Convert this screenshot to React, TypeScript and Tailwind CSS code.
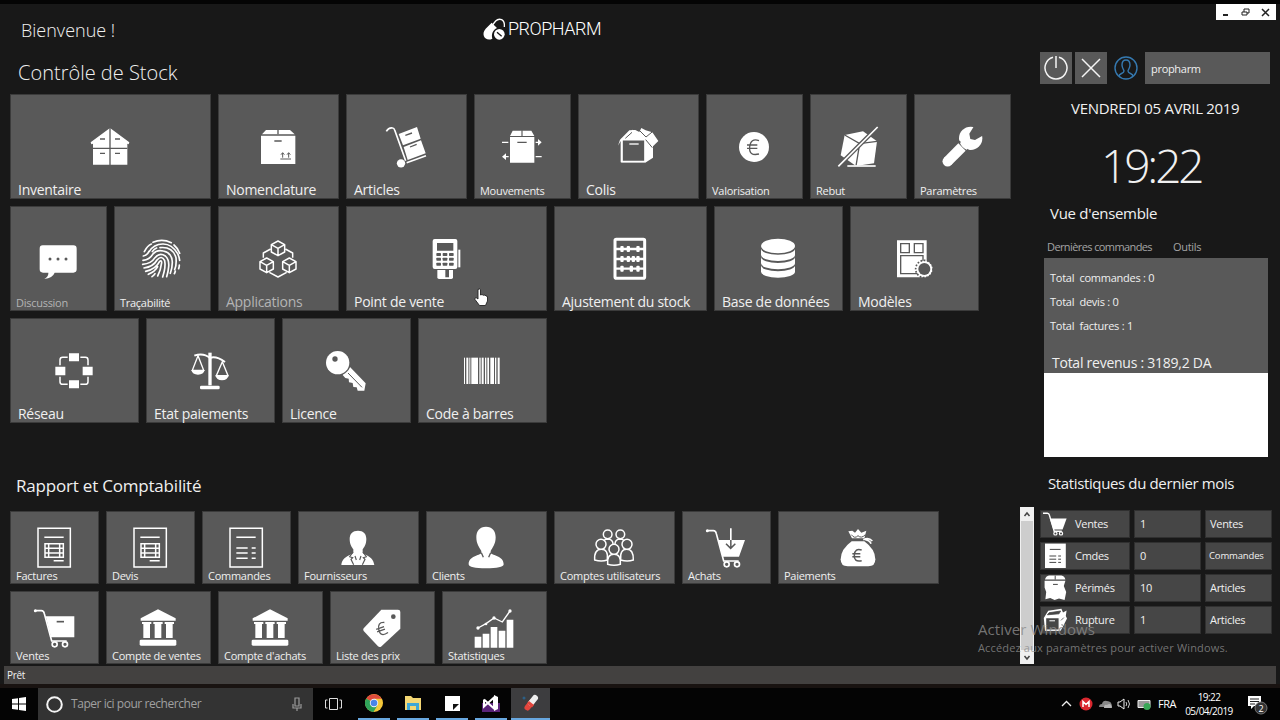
import React from "react";
import { clsx } from "clsx";

const TILE = "#595959";

// every tile drawing lives on a 120x120 grid, shown at 40px
function Glyph({ children, size = 40 }: { children: React.ReactNode; size?: number }) {
  return (
    <svg width={size} height={size} viewBox="0 0 120 120" fill="#fff" className="block overflow-visible">
      {children}
    </svg>
  );
}

const WarehouseIcon = () => (
  <Glyph>
    <path d="M60 3 118 46l-2 6-4-2v63H9V50l-5 2-2-6z" />
    <path d="M60 0v114M9 64h103" stroke={TILE} strokeWidth="4" />
    <path d="M30 36h15M75 36h15M30 79h15M75 79h15" stroke={TILE} strokeWidth="4" />
  </Glyph>
);

const BoxIcon = () => (
  <Glyph>
    <path d="M12 22 24 9h72l14 13zM9 26h103v85H9z" />
    <path d="M60 8v14M49 42h22" stroke={TILE} strokeWidth="4" />
    <path d="M74 92V78m-5 5 5-6 5 6M92 92V78m-5 5 5-6 5 6M67 96h32" stroke={TILE} strokeWidth="3" fill="none" />
  </Glyph>
);

const TrolleyIcon = () => (
  <Glyph>
    <path d="M1 13Q8 1 20 3q4 0 6 6l33 92" fill="none" stroke="#fff" strokeWidth="5" />
    <circle cx="45" cy="109" r="12.5" />
    <path d="m62 107 58-21" stroke="#fff" strokeWidth="5" />
    <path d="M38 21 93 0l11 35-53 20zM53 60l52-20 14 39-54 20z" />
    <path d="m58 25 20-7M72 60l20-8" stroke={TILE} strokeWidth="4" />
  </Glyph>
);

const MovesIcon = () => (
  <Glyph>
    <path d="M32 11h56l9 16H24zM24 30h73v77H24z" />
    <path d="M60 10v18M46 46h28" stroke={TILE} strokeWidth="3.5" />
    <path d="M0 46h19M12 89h8M101 46h10M101 89h18" stroke="#fff" strokeWidth="4" />
    <path d="m108 36 11 10-11 10zM12 79 0 89l12 10z" />
  </Glyph>
);

const OpenBoxIcon = ({ size }: { size?: number }) => (
  <Glyph size={size}>
    <path d="M0 56 6 38l28-28 18-1 12 6 6-12 13 7 20 6 18 26-16 16v34L84 106H8V42z" />
    <path d="M12 38h69v66H12z" fill={TILE} stroke="#fff" strokeWidth="5" />
    <path d="M34 51h28" stroke="#fff" strokeWidth="4" />
    <path d="M12 36 44 8l26 14 12 14z" />
    <path d="M62 8 84 30l22-18M83 38l20 24" stroke={TILE} strokeWidth="3" fill="none" />
    <path d="m22 34 20-18" stroke={TILE} strokeWidth="3" />
  </Glyph>
);

const EuroIcon = () => (
  <Glyph>
    <circle cx="60" cy="60" r="45" />
    <path d="M75 41Q50 32 47 60t28 21M39 54h31M39 64h31" fill="none" stroke={TILE} strokeWidth="4" />
  </Glyph>
);

const ScrapIcon = () => (
  <Glyph>
    <path d="m20 24 55-11 42 30-9 66-54 8L8 85z" />
    <path d="m20 24 45 26 52-7M65 50 54 117" fill="none" stroke={TILE} strokeWidth="4" />
    <path d="M28 117h85" stroke="#fff" strokeWidth="5" />
    <path d="M1 118 119 0" stroke={TILE} strokeWidth="13" />
    <path d="M1 118 119 0" stroke="#fff" strokeWidth="5" />
  </Glyph>
);

const WrenchIcon = () => (
  <Glyph>
    <circle cx="86" cy="34" r="35" />
    <path d="M98-6 82 20l3 16 14 3 28-16z" fill={TILE} />
    <path d="M17 103 66 54" stroke={TILE} strokeWidth="39" />
    <path d="m17 103 43-43" stroke="#fff" strokeWidth="31" />
    <circle cx="17" cy="103" r="15.5" />
    <path d="M54 48a35 35 0 0 0 20 20l14-12-20-22z" />
  </Glyph>
);

const ChatIcon = () => (
  <Glyph>
    <path d="M14 19h92q10 0 10 10v62q0 10-10 10H50q-6 16-31 19 13-7 12-19H15q-10 0-10-10V29q0-10 9-10z" />
    <g fill={TILE}>
      <circle cx="36" cy="60" r="4.5" />
      <circle cx="60" cy="60" r="4.5" />
      <circle cx="84" cy="60" r="4.5" />
    </g>
  </Glyph>
);

const FingerprintIcon = () => (
  <Glyph>
    <g fill="none" stroke="#fff" strokeWidth="5" strokeLinecap="round">
      <path d="M33 10Q60-2 88 11" />
      <path d="M7 38Q16 20 28 15M22 37Q35 16 62 15t45 29q5 10 6 20" />
      <path d="M54 26q38-4 48 30 2 24-4 36M4 51q12-2 17-14M44 27q-8 3-13 11" />
      <path d="M3 64q20-2 29-18 12-15 32-10 26 5 27 34 0 16-6 33M2 76q26-2 37-20 14-17 31-5 12 11 10 32-1 14-6 30" />
      <path d="M6 87q28-4 39-24 14-16 23 2 4 18-6 49M11 97q31-7 42-30 6-4 6 4-3 24-12 40M19 106q20-8 28-23M30 113q6-4 9-9" />
      <path d="M97 104q2-3 3-8M112 78q0 6-2 11M96 18q12 10 17 25" />
    </g>
  </Glyph>
);

const CUBE = "M0-22 20-11V11L0 22-20 11V-11ZM-20-11 0 0 20-11M0 0V22";

const CubesIcon = () => (
  <Glyph>
    <g fill="none" stroke="#fff" strokeWidth="4.5" strokeLinejoin="round">
      <path d={CUBE} transform="translate(60 28)" />
      <path d={CUBE} transform="translate(26 79)" />
      <path d={CUBE} transform="translate(94 79)" />
      <path d="M38 30 16 42v14M82 30l22 12v14M34 100l26 14 26-14" />
    </g>
  </Glyph>
);

const TerminalIcon = () => (
  <Glyph>
    <rect x="20" y="0" width="74" height="90" rx="6" />
    <path d="M97 32h6v53h-6z" />
    <path d="M34 93h47v22q0 5-5 5H39q-5 0-5-5z" />
    <g fill={TILE}>
      <path d="M33 12h49v23H33zM58 93h11v22H58z" />
      {[42, 56, 71].map((y) =>
        [31, 50, 69].map((x) => <rect key={`${x}-${y}`} x={x} y={y} width="14" height="9" rx="2" />)
      )}
    </g>
  </Glyph>
);

const AbacusIcon = () => (
  <Glyph>
    <rect x="15" y="1" width="89" height="117" rx="4" fill="none" stroke="#fff" strokeWidth="9" />
    <path d="M15 30h89M15 60h89M15 89h89" stroke="#fff" strokeWidth="7" />
    {[
      [30, 36], [30, 55], [30, 84],
      [60, 36], [60, 55], [60, 70], [60, 84],
      [89, 36], [89, 64], [89, 84],
    ].map(([y, x]) => (
      <rect key={`${x}-${y}`} x={x - 5} y={y - 9} width="10" height="18" rx="3" />
    ))}
  </Glyph>
);

const DatabaseIcon = () => (
  <Glyph>
    <ellipse cx="60" cy="21" rx="51" ry="22" />
    {[29, 54, 79].map((y) => (
      <path key={y} d={`M9 ${y}a51 18 0 0 0 102 0v19a51 18 0 0 1-102 0z`} />
    ))}
  </Glyph>
);

const TemplateIcon = () => (
  <Glyph>
    <path d="M9 4h89v111H9z" />
    <g fill="none" stroke={TILE} strokeWidth="4">
      <path d="M20 14h26v27H20zM61 14h26v27H61zM20 50h67v54H20z" />
    </g>
    <circle cx="91" cy="90" r="25" />
    <circle cx="91" cy="90" r="26" fill="none" stroke={TILE} strokeWidth="5" strokeDasharray="5 5" />
    <circle cx="91" cy="90" r="18" fill={TILE} />
  </Glyph>
);

const NetworkIcon = () => (
  <Glyph>
    <path d="M45 7h30v24H45zM45 88h30v24H45zM4 47h30v26H4zM86 47h30v26H86z" />
    <path
      d="M41 19H26q-8 0-8 8v16M79 19h15q8 0 8 8v16M41 100H26q-8 0-8-8V77M79 100h15q8 0 8-8V77"
      fill="none"
      stroke="#fff"
      strokeWidth="4.5"
    />
  </Glyph>
);

const ScalesIcon = () => (
  <Glyph>
    <path d="M55 5h10v98H55z" />
    <rect x="30" y="104" width="59" height="11" rx="4" />
    <path d="M13 14q27-10 47 7 18-7 45 12" fill="none" stroke="#fff" strokeWidth="6" />
    <path d="M24 14 7 58h34zM97 32 79 74h35z" fill="none" stroke="#fff" strokeWidth="4" />
    <path d="M4 57h40q-3 14-20 14T4 57zM76 73h40q-3 15-20 15T76 73z" />
  </Glyph>
);

const KeyIcon = () => (
  <Glyph>
    <path d="m72 48 47 49-4 22H95l-3-10-10-1-2-12-11-2-1-11-10-2-8-9z" />
    <circle cx="35" cy="35" r="39" fill={TILE} />
    <circle cx="35" cy="35" r="35" />
    <circle cx="27" cy="24" r="8" fill={TILE} />
    <path d="m66 66 42 43" stroke={TILE} strokeWidth="3" />
  </Glyph>
);

const BARS = [[6, 3], [13, 6], [22, 3], [28, 20], [52, 4], [59, 6], [69, 4], [76, 5], [85, 11], [99, 4], [107, 6]];

const BarcodeIcon = () => (
  <Glyph>
    {BARS.map(([x, w]) => (
      <rect key={x} x={x} y="20" width={w} height="79" />
    ))}
  </Glyph>
);

const InvoiceIcon = () => (
  <Glyph>
    <g fill="none" stroke="#fff" strokeWidth="4.5">
      <path d="M12 1h97v116H12zM31 28h58M59 98h30" />
      <path d="M33 47h55v41H33zM33 61h55M33 75h55M44 47v41M77 47v41" />
    </g>
  </Glyph>
);

const OrderIcon = () => (
  <Glyph>
    <g fill="none" stroke="#fff" strokeWidth="4.5">
      <path d="M12 1h97v116H12zM31 28h58" />
      <path d="M31 60h34M31 75h34M31 91h34M77 60h12M77 75h12M77 91h12" />
    </g>
  </Glyph>
);

const SupplierIcon = () => (
  <Glyph>
    <path d="M60 8c16 0 25 9 25 25 0 18-8 26-11 31v10c0 6 32 8 35 37H10c3-29 36-31 36-37V64c-3-5-11-13-11-31C35 17 44 8 60 8z" />
    <path d="m45 72-10 14 9 3-5 5 8 16M75 72l10 14-9 3 5 5-8 16M51 84l4 12M69 84l-4 12" fill="none" stroke={TILE} strokeWidth="3.5" />
  </Glyph>
);

const ClientIcon = () => (
  <Glyph>
    <path d="M60-4c19 0 29 13 29 32 0 21-10 32-15 41v6c6 8 39 8 39 34 0 8-20 12-53 12S8 117 8 109c0-26 33-26 38-34v-6c-5-9-15-20-15-41C31 9 41-4 60-4z" />
    <path d="m46 74 6 14M74 74l-6 14" stroke={TILE} strokeWidth="4" />
  </Glyph>
);

const UsersIcon = () => (
  <Glyph>
    <g fill={TILE} stroke="#fff" strokeWidth="4.5">
      <path d="M26 48q0-14 15-15 16 1 16 15M63 48q0-14 15-15 16 1 16 15" />
      <circle cx="41" cy="19" r="13" />
      <circle cx="79" cy="19" r="13" />
      <path d="M2 96q-2-32 20-32t18 32q-18 6-38 0zM80 96q-3-32 18-32t20 32q-18 6-38 0z" />
      <circle cx="21" cy="49" r="15" />
      <circle cx="99" cy="49" r="15" />
      <path d="M41 109q-3-30 19-30t19 30q-19 6-38 0z" />
      <circle cx="60" cy="64" r="15" />
    </g>
  </Glyph>
);

const CartFrame = () => (
  <>
    <path d="M4 8h18q7 0 9 9l22 82h45" fill="none" stroke="#fff" strokeWidth="5" />
    <circle cx="4" cy="8" r="4.5" />
    <circle cx="62" cy="109" r="7.5" fill={TILE} stroke="#fff" strokeWidth="5" />
    <circle cx="93" cy="109" r="7.5" fill={TILE} stroke="#fff" strokeWidth="5" />
  </>
);

const PurchaseIcon = () => (
  <Glyph>
    <CartFrame />
    <path d="M37 36h80L99 86H50zM72 1h5v36h-5z" />
    <path d="M74.5 36v24M60 47l14 14 14-14" fill="none" stroke={TILE} strokeWidth="4.5" />
  </Glyph>
);

const MoneyBagIcon = () => (
  <Glyph>
    <path d="M31 10 43 8l8 6 9-11 10 11 15-6-6 23H42z" />
    <path d="M40 20q10 14 20 3 10 10 22-3" fill="none" stroke={TILE} strokeWidth="3" />
    <path d="M41 40h38q33 24 33 54 0 21-21 21H29q-21 0-21-21 0-30 33-54z" />
    <path d="M76 35q16-8 27 4M82 35q14 3 17 12" fill="none" stroke="#fff" strokeWidth="5" />
    <path d="M71 66q-20-7-22 15t22 17M43 77h24M43 86h24" fill="none" stroke={TILE} strokeWidth="4.5" />
  </Glyph>
);

const SalesIcon = () => (
  <Glyph>
    <CartFrame />
    <path d="M35 25h86v63H51z" />
    <path d="M68 41h22" stroke={TILE} strokeWidth="5" />
  </Glyph>
);

const BankIcon = () => (
  <Glyph>
    <path d="m60 4 53 27v7H8v-7z" />
    {[12, 46, 80].map((x) => (
      <path key={x} d={`M${x} 42h28v6h-4v42h-20v-42h-4z`} />
    ))}
    <rect x="5" y="95" width="110" height="18" rx="4" />
  </Glyph>
);

const TagIcon = () => (
  <Glyph>
    <path d="M58 5h50q7 0 7 7v50l-58 54q-5 3-9-1L5 69q-3-4 0-8z" />
    <circle cx="94" cy="26" r="7" fill={TILE} />
    <path
      d="M73 47Q53 38 50 62t23 17M43 58h25M43 66h25"
      fill="none"
      stroke={TILE}
      strokeWidth="4"
      transform="rotate(-20 60 62)"
    />
  </Glyph>
);

const ChartIcon = () => (
  <Glyph>
    <path d="M2 86h20v33H2zM26 77h20v42H26zM50 57h20v62H50zM74 68h20v51H74zM98 35h20v84H98z" />
    <path d="m12 60 24-13 24-17 25 12 23-33" fill="none" stroke="#fff" strokeWidth="4" />
    <circle cx="12" cy="60" r="5" />
    <circle cx="36" cy="48" r="4" />
    <circle cx="60" cy="30" r="5" />
    <circle cx="108" cy="9" r="5" />
  </Glyph>
);

const StatCart = () => (
  <Glyph size={24}>
    <path d="M0 6h22q8 0 10 10l24 80h38" fill="none" stroke="#fff" strokeWidth="7" />
    <path d="M34 32h84L98 88H52z" />
    <circle cx="62" cy="107" r="8" fill="none" stroke="#fff" strokeWidth="6" />
    <circle cx="90" cy="107" r="8" fill="none" stroke="#fff" strokeWidth="6" />
  </Glyph>
);

const StatDoc = () => (
  <Glyph size={24}>
    <path d="M10-2h104v122H10z" />
    <path d="M34 27h54M32 60h34M32 76h34M32 92h34M76 60h14M76 76h14M76 92h14" stroke="#464646" strokeWidth="5" />
  </Glyph>
);

const StatBag = () => (
  <Glyph size={24}>
    <path d="M10 18q4-18 20-20h62q16 2 20 20zM8 24h104l-8 26 12 30-8 40-28-8-22 8-22-10-24 6 4-36-8-22z" />
    <path d="M61-2v20M50 42h24" stroke="#464646" strokeWidth="5" />
  </Glyph>
);

const StatOpenBox = () => (
  <Glyph size={24}>
    <path d="M4 50 26 14 92 4l8 18 18-10-4 28 6 12-20 40-12 22H10z" />
    <path d="M13 48h68v62H13z" fill="#464646" stroke="#fff" strokeWidth="6" />
    <path d="M32 64h28" stroke="#fff" strokeWidth="5" />
    <path d="m22 34 8-10 58-9-8 14zM90 62l14-14M92 84l8 2" fill="#464646" stroke="#464646" strokeWidth="4" />
  </Glyph>
);

interface TileItem {
  label: string;
  icon: React.ReactNode;
  width: string;
  small?: boolean;
  dim?: boolean;
}

const STOCK_ROWS: TileItem[][] = [
  [
    { label: "Inventaire", icon: <WarehouseIcon />, width: "w-[201px]" },
    { label: "Nomenclature", icon: <BoxIcon />, width: "w-[121px]" },
    { label: "Articles", icon: <TrolleyIcon />, width: "w-[121px]" },
    { label: "Mouvements", icon: <MovesIcon />, width: "w-[97px]", small: true },
    { label: "Colis", icon: <OpenBoxIcon />, width: "w-[121px]" },
    { label: "Valorisation", icon: <EuroIcon />, width: "w-[97px]", small: true },
    { label: "Rebut", icon: <ScrapIcon />, width: "w-[97px]", small: true },
    { label: "Paramètres", icon: <WrenchIcon />, width: "w-[97px]", small: true },
  ],
  [
    { label: "Discussion", icon: <ChatIcon />, width: "w-[97px]", small: true, dim: true },
    { label: "Traçabilité", icon: <FingerprintIcon />, width: "w-[97px]", small: true },
    { label: "Applications", icon: <CubesIcon />, width: "w-[121px]", dim: true },
    { label: "Point de vente", icon: <TerminalIcon />, width: "w-[201px]" },
    { label: "Ajustement du stock", icon: <AbacusIcon />, width: "w-[153px]" },
    { label: "Base de données", icon: <DatabaseIcon />, width: "w-[129px]" },
    { label: "Modèles", icon: <TemplateIcon />, width: "w-[129px]" },
  ],
  [
    { label: "Réseau", icon: <NetworkIcon />, width: "w-[129px]" },
    { label: "Etat paiements", icon: <ScalesIcon />, width: "w-[129px]" },
    { label: "Licence", icon: <KeyIcon />, width: "w-[129px]" },
    { label: "Code à barres", icon: <BarcodeIcon />, width: "w-[129px]" },
  ],
];

const REPORT_ROWS: TileItem[][] = [
  [
    { label: "Factures", icon: <InvoiceIcon />, width: "w-[89px]", small: true },
    { label: "Devis", icon: <InvoiceIcon />, width: "w-[89px]", small: true },
    { label: "Commandes", icon: <OrderIcon />, width: "w-[89px]", small: true },
    { label: "Fournisseurs", icon: <SupplierIcon />, width: "w-[121px]", small: true },
    { label: "Clients", icon: <ClientIcon />, width: "w-[121px]", small: true },
    { label: "Comptes utilisateurs", icon: <UsersIcon />, width: "w-[121px]", small: true },
    { label: "Achats", icon: <PurchaseIcon />, width: "w-[89px]", small: true },
    { label: "Paiements", icon: <MoneyBagIcon />, width: "w-[161px]", small: true },
  ],
  [
    { label: "Ventes", icon: <SalesIcon />, width: "w-[89px]", small: true },
    { label: "Compte de ventes", icon: <BankIcon />, width: "w-[105px]", small: true },
    { label: "Compte d'achats", icon: <BankIcon />, width: "w-[105px]", small: true },
    { label: "Liste des prix", icon: <TagIcon />, width: "w-[105px]", small: true },
    { label: "Statistiques", icon: <ChartIcon />, width: "w-[105px]", small: true },
  ],
];

const STATS = [
  { icon: <StatCart />, name: "Ventes", value: "1", unit: "Ventes" },
  { icon: <StatDoc />, name: "Cmdes", value: "0", unit: "Commandes" },
  { icon: <StatBag />, name: "Périmés", value: "10", unit: "Articles" },
  { icon: <StatOpenBox />, name: "Rupture", value: "1", unit: "Articles" },
];

function Tile({ item, height }: { item: TileItem; height: string }) {
  return (
    <div className={clsx("grid shrink-0 border border-[#3b3b3b] bg-[#595959]", item.width, height)}>
      <div className="col-start-1 row-start-1 self-center justify-self-center pr-px">{item.icon}</div>
      <div
        className={clsx(
          "col-start-1 row-start-1 self-end whitespace-nowrap",
          item.small
            ? "pl-[5px] text-[11px] leading-[15px] tracking-[-0.27px]"
            : "pl-[7px] text-[14px] leading-[17px] tracking-[-0.28px]",
          item.dim ? "text-[#b4b4b4]" : "text-[#f0f0f0]"
        )}
      >
        {item.label}
      </div>
    </div>
  );
}

function TileGrid({ rows, height }: { rows: TileItem[][]; height: string }) {
  return (
    <div className="flex flex-col gap-[7px] pl-[10px]">
      {rows.map((row, i) => (
        <div key={i} className="flex gap-[7px]">
          {row.map((item) => (
            <Tile key={item.label} item={item} height={height} />
          ))}
        </div>
      ))}
    </div>
  );
}

function Logo() {
  return (
    <div className="-mt-[3px] flex items-center">
      <svg width="22" height="22" viewBox="0 0 66 66" className="overflow-visible">
        <path d="M26 24 38 9q8-8 18-4 10 6 8 22" fill="none" stroke="#fff" strokeWidth="4" />
        <path d="M26 14 8 32C-8 50 8 72 28 62c-4-14 2-26 14-32z" fill="#fff" />
        <circle cx="49" cy="49" r="16" fill="#fff" />
        <path d="m42 43 14 12" stroke="#181818" strokeWidth="4" />
      </svg>
      <span className="ml-[3px] font-['Roboto'] text-[18px] font-light leading-[26px] tracking-[-0.5px] text-white">
        PROPHARM
      </span>
    </div>
  );
}

function WindowControls() {
  return (
    <div className="flex h-[16px] w-[60px] items-center justify-around self-end bg-white">
      <svg width="60" height="16" fill="none" stroke="#222">
        <path d="M7 11h5" strokeWidth="2" />
        <path d="M26 8h5v3h-5zM28 8V5h5v4h-2" strokeWidth="1" />
        <path d="m46 5 7 7M53 5l-7 7" strokeWidth="1.5" />
      </svg>
    </div>
  );
}

function SidePanel() {
  return (
    <aside className="flex w-[236px] shrink-0 flex-col text-[#f0f0f0]">
      <WindowControls />
      <div className="mt-[32px] flex h-[32px]">
        <div className="flex w-[32px] items-center justify-center bg-[#595959]">
          <svg width="24" height="24" fill="none" stroke="#f4f4f4" strokeWidth="1.5">
            <path d="M9 1.3a11 11 0 1 0 6 0M12 0v12" />
          </svg>
        </div>
        <div className="ml-[3px] flex w-[32px] items-center justify-center bg-[#595959]">
          <svg width="20" height="20" stroke="#f4f4f4" strokeWidth="1.5">
            <path d="m1 1 18 18M19 1 1 19" />
          </svg>
        </div>
        <div className="flex w-[38px] items-center justify-center">
          <svg width="24" height="24" fill="none" stroke="#3579b0" strokeWidth="1.4">
            <circle cx="12" cy="12" r="11" />
            <path d="M5 20c0-3 5-2 5-5 0-1-2-3-2-6s1-5 4-5 4 2 4 5-2 5-2 6c0 3 5 2 5 5" />
          </svg>
        </div>
        <div className="w-[125px] bg-[#595959] pl-[6px] text-[11px] leading-[33px] tracking-[-0.3px]">propharm</div>
      </div>
      <div className="mt-[14px] pl-[31px] text-[15px] leading-[20px] tracking-[-0.3px]">VENDREDI 05 AVRIL 2019</div>
      <div className="mt-[19px] pl-[61px] text-[46px] font-light leading-[56px] tracking-[-3.1px]">19:22</div>
      <div className="mt-[10px] pl-[10px] text-[15px] leading-[20px] tracking-[-0.3px]">Vue d'ensemble</div>
      <div className="mt-[16px] flex pl-[7px] text-[11px] leading-[16px] tracking-[-0.6px] text-[#a4a4a4]">
        <span className="w-[126px]">Dernières commandes</span>
        <span className="tracking-[-0.3px]">Outils</span>
      </div>
      <div className="ml-[4px] mt-[3px] h-[199px] w-[224px] bg-white">
        <div className="h-[115px] whitespace-pre bg-[#595959] pl-[6px] pt-[8px] text-[11px] leading-[24px] tracking-[-0.25px]">
          <div>Total  commandes : 0</div>
          <div>Total  devis : 0</div>
          <div>Total  factures : 1</div>
          <div className="mt-[15px] pl-[2px] text-[14px] leading-[20px]">Total revenus : 3189,2 DA</div>
        </div>
      </div>
      <div className="mt-[16px] pl-[8px] text-[15px] leading-[20px] tracking-[-0.37px]">Statistiques du dernier mois</div>
      <div className="mt-[17px] flex flex-col gap-[4px] text-[11px] leading-[26px] tracking-[-0.3px]">
        {STATS.map((s) => (
          <div key={s.name} className="flex h-[28px] gap-[4px]">
            <div className="flex w-[90px] items-center border border-[#303030] bg-[#464646] pl-[2px]">
              {s.icon}
              <span className="ml-[8px]">{s.name}</span>
            </div>
            <div className="w-[67px] border border-[#303030] bg-[#464646] pl-[5px]">{s.value}</div>
            <div
              className={clsx(
                "w-[67px] border border-[#303030] bg-[#464646]",
                s.unit === "Commandes" ? "pl-[3px] text-[9.5px] font-medium tracking-[-0.15px]" : "pl-[4px]"
              )}
            >
              {s.unit}
            </div>
          </div>
        ))}
      </div>
    </aside>
  );
}

function ScrollBar() {
  return (
    <div className="mt-[503px] flex h-[157px] w-[14px] shrink-0 flex-col items-center justify-between bg-[#f0f0f0]">
      <svg width="14" height="14" fill="none" stroke="#444" strokeWidth="1.5">
        <path d="m4.5 9 2.5-3 2.5 3" />
      </svg>
      <div className="w-[12px] flex-1 bg-[#cdcdcd]" />
      <svg width="14" height="14" fill="none" stroke="#444" strokeWidth="1.5">
        <path d="m4.5 6 2.5 3 2.5-3" />
      </svg>
    </div>
  );
}

function TaskApp({ children, active, width }: { children: React.ReactNode; active?: boolean; width: string }) {
  return (
    <div
      className={clsx(
        "flex h-[32px] items-center justify-center border-b-2 border-[#68a8e0]",
        width,
        active && "bg-[#3d3d3f]"
      )}
    >
      {children}
    </div>
  );
}

function Taskbar() {
  return (
    <div className="flex h-[32px] items-center bg-[#040404] text-white">
      <div className="flex w-[38px] justify-center">
        <svg width="14" height="14" fill="#fff">
          <path d="M0 2l6-.8v5.300H0zM7 1l7-1v6.500H7zM0 7.500h6v5.300L0 12zM7 7.500h7V14l-7-1z" />
        </svg>
      </div>
      <div className="flex h-[32px] w-[275px] items-center bg-[#333] pl-[8px]">
        <svg width="17" height="17" fill="none" stroke="#f4f4f4" strokeWidth="2">
          <circle cx="8.5" cy="8.5" r="7.3" />
        </svg>
        <span className="ml-[8px] w-[221px] text-[12px] tracking-[-0.45px] text-[#a0a0a0]">Taper ici pour rechercher</span>
        <svg width="10" height="14" fill="none" stroke="#9a9a9a" strokeWidth="1.2">
          <path d="M3 1h4v8H3zM1 7v4h8V7M5 11v3" />
        </svg>
      </div>
      <div className="flex w-[45px] justify-center pr-[5px]">
        <svg width="17" height="12" fill="none" stroke="#ddd">
          <path d="M4.5.5h8v11h-8zM2.500 2h-2v8h2M14.500 2h2v8h-2" />
        </svg>
      </div>
      <TaskApp width="w-[32px]">
        <svg width="18" height="18" viewBox="0 0 18 18">
          <circle cx="9" cy="9" r="9" fill="#f5c83a" />
          <path d="M9 9 1.200 4.500A9 9 0 0 1 16.800 4.800H9z" fill="#df4b3c" />
          <path d="M9 9 1.200 4.500A9 9 0 0 0 8.500 18L12 12z" fill="#2fa45a" />
          <circle cx="9" cy="9" r="4.2" fill="#f2f2f2" />
          <circle cx="9" cy="9" r="3.3" fill="#4a84e8" />
        </svg>
      </TaskApp>
      <div className="w-[7px]" />
      <TaskApp width="w-[32px]">
        <svg width="18" height="16">
          <path d="M1 1h6l2 2h8v12H1z" fill="#f4d774" />
          <path d="M3 15V8h12v7h-3v-4H6v4z" fill="#3fa7d6" />
        </svg>
      </TaskApp>
      <div className="w-[7px]" />
      <TaskApp width="w-[32px]">
        <svg width="15" height="15">
          <path d="M0 0h15v15H0z" fill="#fff" />
          <path d="M8 14V8h6z" fill="#111" />
        </svg>
      </TaskApp>
      <div className="w-[7px]" />
      <TaskApp width="w-[32px]">
        <svg width="18" height="18">
          <path d="M0 9h18v9H0z" fill="#5a2378" />
          <path d="M2 5.500v7l10-9v11l-10-9" fill="none" stroke="#fff" strokeWidth="2" />
          <path d="m12 1 4 2v12l-4 2z" fill="#fff" />
        </svg>
      </TaskApp>
      <div className="w-[4px]" />
      <TaskApp width="w-[39px]" active>
        <svg width="18" height="18">
          <path d="m5.500 13.500 4-5" stroke="#e2453c" strokeWidth="6" strokeLinecap="round" />
          <path d="m9 9 4-5" stroke="#eee" strokeWidth="6" strokeLinecap="round" />
          <path d="m7 7 5 4-2 2.500-5-4z" fill="#e2453c" />
          <circle cx="2" cy="4" r="1.5" fill="#2c5f86" />
        </svg>
      </TaskApp>
      <div className="ml-auto flex h-[32px] items-center">
        <svg width="98" height="16" fill="none">
          <path d="m2 10 4.500-4.500L11 10" stroke="#eee" strokeWidth="1.3" />
          <circle cx="26" cy="8" r="6.5" fill="#d9272e" />
          <path d="M23 11V5.500l3 3 3-3V11" stroke="#fff" strokeWidth="1.5" />
          <path d="M39 11q0-3 3-3 1-4 5-3 5 0 5 6z" fill="#888" />
          <path d="M44 12q0-4 3-3 4-3 5 3z" fill="#b5b5b5" />
          <path d="M58 6h2l4-3v10l-4-3h-2z" stroke="#eee" />
          <path d="M66 6q1.500 2 0 4M68 4q3 4 0 8" stroke="#ccc" />
          <path d="M78 4.500h12v7H78z" fill="#999" stroke="#eee" />
          <circle cx="87" cy="10.5" r="3.5" fill="#39a857" />
        </svg>
        <span className="w-[26px] text-[11px] tracking-[-0.5px]">FRA</span>
        <div className="w-[50px] text-center text-[10px] leading-[14.500px] tracking-[-0.55px]">
          <div>19:22</div>
          <div className="whitespace-nowrap">05/04/2019</div>
        </div>
        <svg width="21" height="22" className="ml-[13px] mr-[12px]">
          <path d="M1 3h13v10H7l-3 3v-3H1z" fill="#fff" />
          <path d="M3 6h9M3 8.500h9M3 11h5" stroke="#222" />
          <circle cx="14" cy="15" r="6" fill="#333" stroke="#777" />
          <text x="14" y="18.5" fill="#fff" fontSize="9" textAnchor="middle">2</text>
        </svg>
      </div>
    </div>
  );
}

export default function App() {
  return (
    <div className="relative flex h-[720px] w-[1280px] flex-col overflow-hidden bg-[#181818] font-['Open_Sans','Noto_Sans',sans-serif]">
      <div className="h-[4px] shrink-0 bg-[#040404]" />
      <div className="flex h-[662px] shrink-0">
        <main className="w-[1020px] shrink-0 pt-[12px] text-[#f0f0f0]">
          <div className="flex h-[28px] items-center">
            <div className="w-[483px] pl-[21px] text-[18px] font-light leading-[28px]">Bienvenue !</div>
            <Logo />
          </div>
          <h2 className="mb-[7px] mt-[15px] pl-[18px] text-[20px] font-light leading-[28px]">Contrôle de Stock</h2>
          <TileGrid rows={STOCK_ROWS} height="h-[105px]" />
          <h2 className="mb-[11px] mt-[49px] pl-[16px] text-[17px] leading-[28px] tracking-[-0.2px]">Rapport et Comptabilité</h2>
          <TileGrid rows={REPORT_ROWS} height="h-[73px]" />
        </main>
        <ScrollBar />
        <div className="w-[6px] shrink-0" />
        <SidePanel />
      </div>
      <div className="mx-[4px] h-[18px] shrink-0 bg-[#434140] pl-[3px] text-[10px] leading-[19px] tracking-[-0.3px] text-[#f0f0f0]">
        Prêt
      </div>
      <div className="h-[4px] shrink-0 bg-[#191311]" />
      <Taskbar />

      {/* activation notice */}
      <div className="absolute left-[978px] top-[618px] whitespace-nowrap text-[#8c8c8c]/80">
        <div className="text-[15px] leading-[22px] tracking-[0.1px]">Activer Windows</div>
        <div className="text-[11px] leading-[15px] tracking-[0.16px]">Accédez aux paramètres pour activer Windows.</div>
      </div>

      {/* pointer */}
      <svg className="absolute left-[474px] top-[288px]" width="15" height="19" fill="#fff" stroke="#222" strokeWidth="0.9">
        <path d="M4 1.500q1.500-1.200 2.500 0V7l1.500-.5 1.500.8 1.500-.3 1 1 1.500.5V13l-2 4.500H5.500L1 11.500q-.5-1.500 1-2l2 1.500z" />
      </svg>
    </div>
  );
}
